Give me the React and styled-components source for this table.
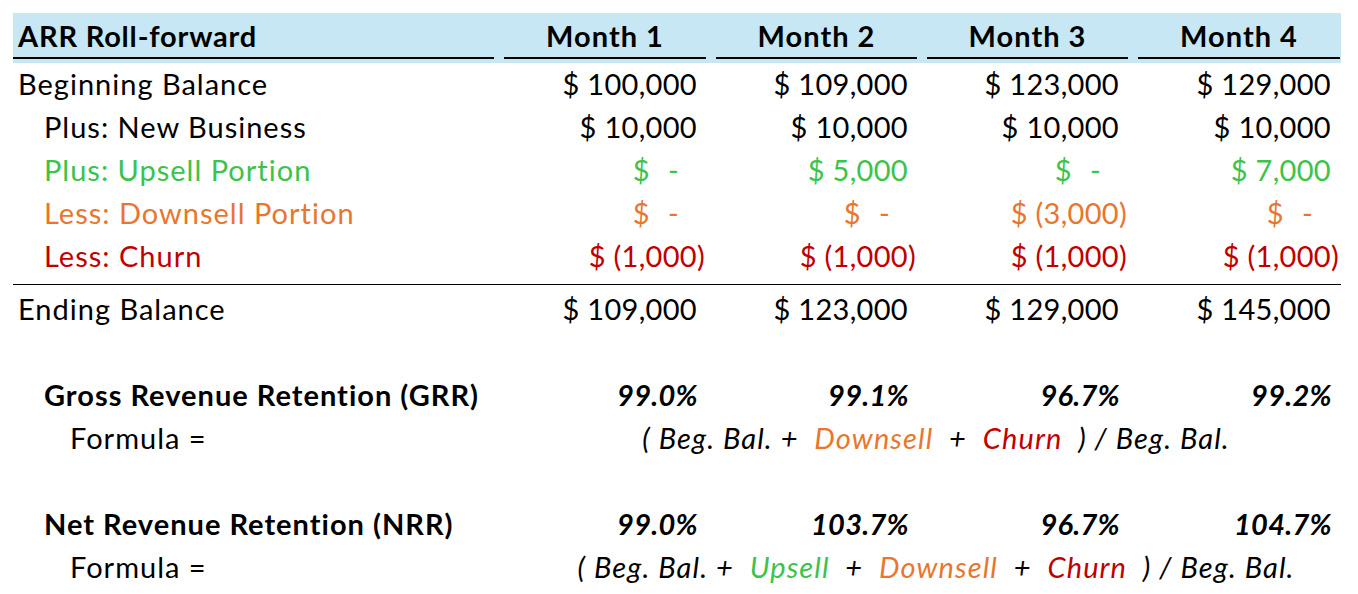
import React from "react";
import styled, { createGlobalStyle } from "styled-components";

const GlobalStyle = createGlobalStyle`
	html, body {
		margin: 0;
		background: #ffffff;
	}
	body {
		font-family: Lato, "Open Sans", "Liberation Sans", sans-serif;
		color: #000000;
	}
`;

const COLORS = {
	plain: "#000000",
	up: "#3bc34a",
	down: "#e9762e",
	churn: "#c00000",
};

const Sheet = styled.div`
	padding: 13px 0 0 13px;
	width: 1328px;
	font-size: 29px;
`;

const Grid = styled.div`
	display: grid;
	grid-template-columns: 481px 202px 201px 201px 202px;
	column-gap: 10px;
`;

const HeaderBand = styled(Grid)`
	height: 50px;
	padding: 0 1px 4px 0;
	box-sizing: border-box;
	background: #c6e7f3;
`;

const HeaderCell = styled.div`
	display: flex;
	align-items: flex-end;
	justify-content: ${(p) => (p.$left ? "flex-start" : "center")};
	padding: 0 0 7px ${(p) => (p.$left ? "5px" : "0")};
	border-bottom: 2px solid #000;
	font-weight: 700;
	line-height: 1;
	letter-spacing: ${(p) => (p.$left ? "0.8px" : "1px")};
`;

const Row = styled(Grid)`
	height: 43px;
	box-sizing: border-box;
	padding-bottom: 3px;
	align-items: center;
	color: ${(p) => COLORS[p.$tone || "plain"]};
`;

const Label = styled.div`
	padding-left: ${(p) => 5 + p.$indent * 26}px;
	font-weight: ${(p) => (p.$bold ? 700 : 400)};
	letter-spacing: 1px;
	white-space: nowrap;
`;

const Amount = styled.div`
	text-align: right;
	padding-right: 1px;
	letter-spacing: 0.3px;
	white-space: pre;
`;

const Hidden = styled.span`
	visibility: hidden;
`;

const Dash = styled.span`
	display: inline-block;
	margin: 0 26px 0 18px;
`;

const Pct = styled.div`
	text-align: right;
	padding-right: 8px;
	font-weight: 700;
	font-style: italic;
	letter-spacing: 0.3px;
`;

const Formula = styled.div`
	grid-column: 2 / span 4;
	text-align: center;
	padding-left: 28px;
	font-style: italic;
	letter-spacing: 1.1px;
	white-space: pre;
`;

const Word = styled.span`
	color: ${(p) => COLORS[p.$tone]};
`;

const Separator = styled.div`
	margin: 6px 0 3px;
	border-top: 1px solid #000;
`;

const Spacer = styled.div`
	height: 43px;
`;

const fmt = (n) => {
	if (n === 0) return <>$<Dash>-</Dash></>;
	const s = Math.abs(n).toLocaleString("en-US");
	if (n < 0) return `$ (${s})`;
	return <>$ {s}<Hidden>)</Hidden></>;
};

const rows = [
	{ label: "Beginning Balance", indent: 0, values: [100000, 109000, 123000, 129000] },
	{ label: "Plus: New Business", indent: 1, values: [10000, 10000, 10000, 10000] },
	{ label: "Plus: Upsell Portion", indent: 1, tone: "up", values: [0, 5000, 0, 7000] },
	{ label: "Less: Downsell Portion", indent: 1, tone: "down", values: [0, 0, -3000, 0] },
	{ label: "Less: Churn", indent: 1, tone: "churn", values: [-1000, -1000, -1000, -1000] },
];

const ending = [109000, 123000, 129000, 145000];

const AmountRow = ({ label, indent, tone, values }) => (
	<Row $tone={tone}>
		<Label $indent={indent}>{label}</Label>
		{values.map((v, i) => (
			<Amount key={i}>{fmt(v)}</Amount>
		))}
	</Row>
);

const App = () => {
	return (
		<>
			<GlobalStyle />
			<Sheet>
				<HeaderBand>
					<HeaderCell $left>ARR Roll-forward</HeaderCell>
					<HeaderCell>Month 1</HeaderCell>
					<HeaderCell>Month 2</HeaderCell>
					<HeaderCell>Month 3</HeaderCell>
					<HeaderCell>Month 4</HeaderCell>
				</HeaderBand>

				{rows.map((r) => (
					<AmountRow key={r.label} {...r} />
				))}

				<Separator />
				<AmountRow label="Ending Balance" indent={0} values={ending} />

				<Spacer />
				<Row>
					<Label $indent={1} $bold>Gross Revenue Retention (GRR)</Label>
					{["99.0%", "99.1%", "96.7%", "99.2%"].map((p) => (
						<Pct key={p}>{p}</Pct>
					))}
				</Row>
				<Row>
					<Label $indent={2}>Formula =</Label>
					<Formula>
						{"( Beg. Bal. +  "}
						<Word $tone="down">Downsell</Word>
						{"  +  "}
						<Word $tone="churn">Churn</Word>
						{"  ) / Beg. Bal."}
					</Formula>
				</Row>

				<Spacer />
				<Row>
					<Label $indent={1} $bold>Net Revenue Retention (NRR)</Label>
					{["99.0%", "103.7%", "96.7%", "104.7%"].map((p) => (
						<Pct key={p}>{p}</Pct>
					))}
				</Row>
				<Row>
					<Label $indent={2}>Formula =</Label>
					<Formula>
						{"( Beg. Bal. +  "}
						<Word $tone="up">Upsell</Word>
						{"  +  "}
						<Word $tone="down">Downsell</Word>
						{"  +  "}
						<Word $tone="churn">Churn</Word>
						{"  ) / Beg. Bal."}
					</Formula>
				</Row>
			</Sheet>
		</>
	);
};

export default App;
